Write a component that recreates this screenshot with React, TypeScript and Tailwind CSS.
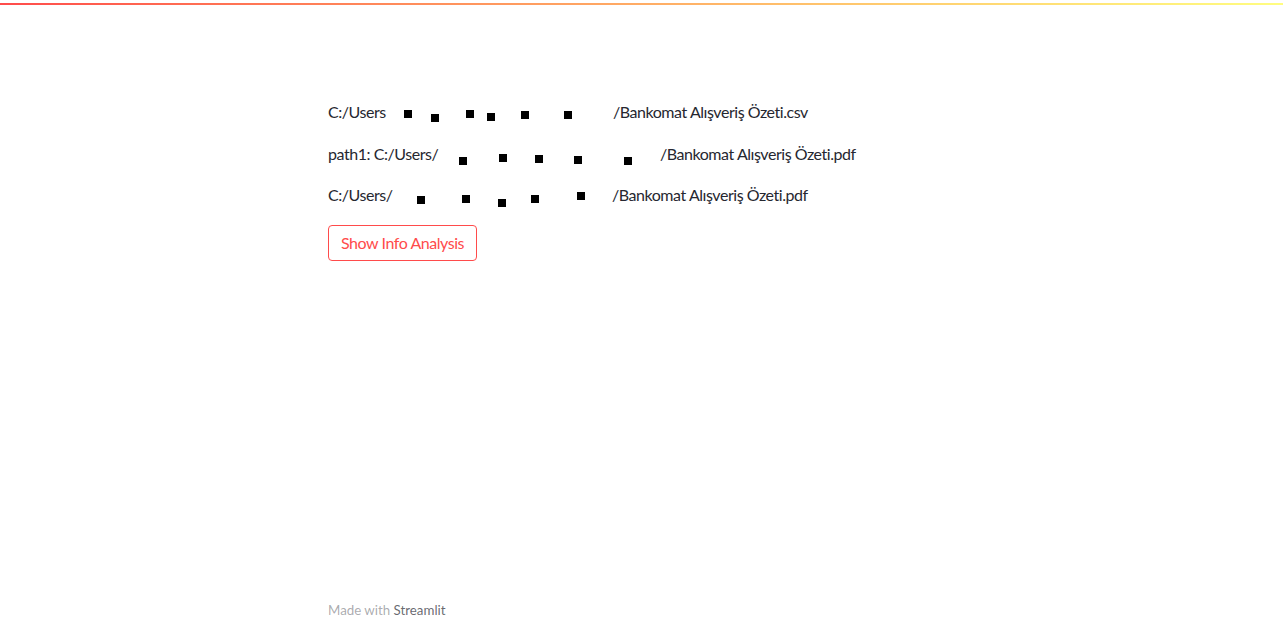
import React from "react";

type Mark = { x: number; y: number };

const lines: { prefix: string; prefixW: number; gapW: number; suffix: string; marks: Mark[] }[] = [
  {
    prefix: "C:/Users",
    prefixW: 56,
    gapW: 229,
    suffix: "/Bankomat Alışveriş Özeti.csv",
    marks: [
      { x: 20, y: 11 },
      { x: 47, y: 15 },
      { x: 82, y: 11 },
      { x: 103, y: 14 },
      { x: 137, y: 12 },
      { x: 180, y: 12 },
    ],
  },
  {
    prefix: "path1: C:/Users/",
    prefixW: 105,
    gapW: 227,
    suffix: "/Bankomat Alışveriş Özeti.pdf",
    marks: [
      { x: 26, y: 16 },
      { x: 66, y: 13 },
      { x: 102, y: 14 },
      { x: 141, y: 15 },
      { x: 191, y: 16 },
    ],
  },
  {
    prefix: "C:/Users/",
    prefixW: 61,
    gapW: 223,
    suffix: "/Bankomat Alışveriş Özeti.pdf",
    marks: [
      { x: 28, y: 14 },
      { x: 73, y: 13 },
      { x: 109, y: 17 },
      { x: 142, y: 13 },
      { x: 188, y: 10 },
    ],
  },
];

export default function App() {
  return (
    <div className="min-h-screen flex flex-col bg-white text-[#262730] font-['Source_Sans_Pro','Lato',sans-serif]">
      {/* top decoration */}
      <div className="pt-[3px]">
        <div className="h-[2px] bg-gradient-to-r from-[#ff4b4b] to-[#fffd80]" />
      </div>

      <main className="flex-1 mx-auto w-[627px] pt-[94px] flex flex-col gap-4">
        {lines.map((line, i) => (
          <div
            key={i}
            className="flex items-center h-[25.6px] text-base leading-[1.6] tracking-[-0.45px] whitespace-nowrap"
          >
            <span className="inline-block" style={{ width: line.prefixW }}>
              {line.prefix}
            </span>
            <span className="relative inline-block h-[25.6px]" style={{ width: line.gapW }}>
              {line.marks.map((m, j) => (
                <span
                  key={j}
                  className="absolute w-2 h-2 bg-black"
                  style={{ left: m.x, top: m.y }}
                />
              ))}
            </span>
            <span>{line.suffix}</span>
          </div>
        ))}

        <div className="pt-px">
          <button className="h-[36px] px-3 rounded border border-[#ff4b4b] text-[#ff4b4b] bg-white text-base leading-[1.6] tracking-[-0.45px]">
            Show Info Analysis
          </button>
        </div>
      </main>

      <footer className="mx-auto w-[627px] pb-[5px] text-[13.3px] leading-[20px] text-[rgba(38,39,48,0.4)]">
        Made with <span className="text-[rgba(38,39,48,0.7)]">Streamlit</span>
      </footer>
    </div>
  );
}
